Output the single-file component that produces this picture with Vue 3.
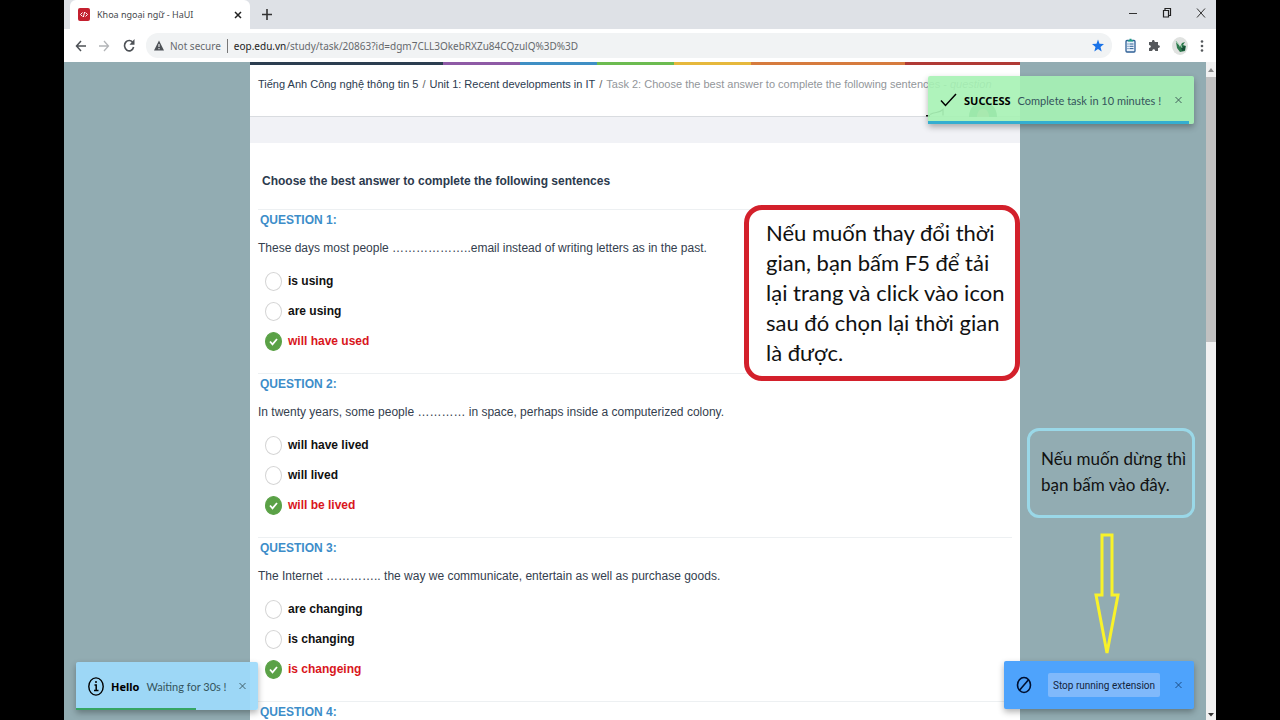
<template>
  <div class="screen">
    <div class="browser">
      <header class="tab-strip">
        <div class="tab">
          <svg class="favicon" viewBox="0 0 12 13" aria-hidden="true">
            <rect width="12" height="13" rx="2" fill="#c4202f" />
            <path d="M4.5 4.5 2.5 6.5l2 2M7.5 4.5l2 2-2 2M6.6 4 5.4 9" fill="none" stroke="#fff" stroke-width="1" />
          </svg>
          <span class="tab-title">Khoa ngoại ngữ - HaUI</span>
          <button class="icon-btn" type="button" aria-label="Close tab">
            <svg width="8" height="8" viewBox="0 0 8 8">
              <path d="M1 1l6 6M7 1 1 7" stroke="#222" stroke-width="1.5" />
            </svg>
          </button>
        </div>
        <button class="icon-btn new-tab" type="button" aria-label="New tab">
          <svg width="10" height="11" viewBox="0 0 10 11">
            <path d="M5 0v11M0 5.5h10" stroke="#333" stroke-width="1.6" />
          </svg>
        </button>
        <div class="window-controls">
          <button class="icon-btn" type="button" aria-label="Minimize">
            <svg width="10" height="12" viewBox="0 0 10 12"><path d="M1 6.500h8" stroke="#333" /></svg>
          </button>
          <button class="icon-btn" type="button" aria-label="Restore">
            <svg width="10" height="12" viewBox="0 0 10 12">
              <path d="M1.5 3.500h5v6.500h-5zM3 3V1.500h5.500V8.500H7" fill="none" stroke="#222" stroke-width="1.2" />
            </svg>
          </button>
          <button class="icon-btn" type="button" aria-label="Close">
            <svg width="10" height="12" viewBox="0 0 10 12"><path d="M1 1.500l8 9M9 1.500l-8 9" stroke="#333" /></svg>
          </button>
        </div>
      </header>

      <div class="toolbar">
        <button class="icon-btn" type="button" aria-label="Back">
          <svg width="11" height="12" viewBox="0 0 11 12">
            <path d="M11 6H1.500M6 1 1.500 6 6 11" fill="none" stroke="#4d5156" stroke-width="1.5" />
          </svg>
        </button>
        <button class="icon-btn" type="button" aria-label="Forward">
          <svg width="11" height="12" viewBox="0 0 11 12">
            <path d="M0 6h9.500M5 1l4.500 5L5 11" fill="none" stroke="#b3b5b8" stroke-width="1.3" />
          </svg>
        </button>
        <button class="icon-btn" type="button" aria-label="Reload">
          <svg width="12" height="13" viewBox="0 0 12 13">
            <path d="M10 3.800A4.600 5.200 0 1 0 10.600 8" fill="none" stroke="#4d5156" stroke-width="1.6" />
            <path d="M11.500 0v5.700H6.500z" fill="#4d5156" />
          </svg>
        </button>
        <div class="address-bar">
          <svg width="10" height="11" viewBox="0 0 10 11" aria-hidden="true">
            <path d="M5 .5 10 10.500H0z" fill="#4d5156" />
            <path d="M5 4v3M5 8v1.200" stroke="#f1f3f4" stroke-width="1.100" />
          </svg>
          <span class="not-secure">Not secure</span>
          <span class="divider"></span>
          <span class="url"><b>eop.edu.vn</b>/study/task/20863?id=dgm7CLL3OkebRXZu84CQzulQ%3D%3D</span>
          <button class="icon-btn star" type="button" aria-label="Bookmark">
            <svg width="12" height="13" viewBox="0 0 12 13">
              <path d="M6 .5 7.500 4.700 12 5 8.500 8 9.700 12.500 6 10 2.300 12.500 3.500 8 0 5l4.500-.3z" fill="#1a73e8" />
            </svg>
          </button>
        </div>
        <div class="extensions">
          <button class="icon-btn" type="button" aria-label="Clipboard">
            <svg width="11" height="15" viewBox="0 0 11 15">
              <rect x="1" y="2.500" width="9" height="11.500" rx="1" fill="#eaf2fb" stroke="#2f6096" stroke-width="1.300" />
              <path d="M3 3.500V2h1.500V.7h2V2H8v1.500z" fill="#239a86" />
              <path d="M2.500 6h1M4.500 6h4M2.500 8.300h1M4.500 8.300h4M2.500 10.600h1M4.500 10.600h4" stroke="#2f6096" />
            </svg>
          </button>
          <button class="icon-btn" type="button" aria-label="Extensions">
            <svg width="12" height="13" viewBox="0 0 12 13">
              <path d="M1 3h3C3.500.3 7 .3 6.700 3H10v3.200c2.500-.3 2.500 3 0 2.800V12H7.200c0-2.300-3-2.300-3 0H1V9c2.400 0 2.400-3 0-3z" fill="#55585c" />
            </svg>
          </button>
          <button class="icon-btn" type="button" aria-label="Profile">
            <svg width="16" height="18" viewBox="0 0 16 18">
              <ellipse cx="8" cy="9" rx="8" ry="9" fill="#e0e2e0" />
              <path d="M4 5l3 3 1 2 2-4 3-1-2 3 3 1-1 5-5 1-3-4z" fill="#2d7a4d" />
              <path d="M9 10l4-1 0 4-3 1z" fill="#164d35" />
              <path d="M4 4l3 4M9 8l1 3" stroke="#8fc6a0" />
            </svg>
          </button>
          <button class="icon-btn" type="button" aria-label="Menu">
            <svg width="4" height="14" viewBox="0 0 4 14">
              <g fill="#55585c"><circle cx="2" cy="2.500" r="1.300" /><circle cx="2" cy="7" r="1.300" /><circle cx="2" cy="11.500" r="1.300" /></g>
            </svg>
          </button>
        </div>
      </div>

      <div class="viewport">
        <div class="page">
          <main class="sheet">
            <div class="stripe">
              <span
                v-for="part in stripe"
                :key="part.color"
                :style="{ width: part.width + '%', background: part.color }"
              ></span>
            </div>
            <nav class="breadcrumb" aria-label="Breadcrumb">
              <a href="#">Tiếng Anh Công nghệ thông tin 5</a>
              <span class="slash">/</span>
              <a href="#">Unit 1: Recent developments in IT</a>
              <span class="slash">/</span>
              <span class="current">Task 2: Choose the best answer to complete the following sentences - <i>question</i></span>
              <svg class="header-art" width="72" height="18" viewBox="0 0 72 18" aria-hidden="true">
                <path d="M0 15h4v1.500H0z" fill="#111" />
                <path d="M4 14.500c5-3 9-1 13-5v6" fill="none" stroke="#444" stroke-width="1.200" />
                <path d="M43 17c0-20 28-20 28 0z" fill="#3f8a5a" />
                <path d="M51 17c0-11 12-11 12 0z" fill="#b79a86" />
              </svg>
            </nav>
            <div class="band"></div>

            <form class="quiz" @submit.prevent>
              <h1>Choose the best answer to complete the following sentences</h1>
              <section v-for="(q, qi) in questions" :key="qi" class="question">
                <h2>QUESTION {{ qi + 1 }}:</h2>
                <p>{{ q.text }}</p>
                <label
                  v-for="option in q.options"
                  :key="option"
                  class="option"
                  :class="{ chosen: q.answer === option }"
                >
                  <span class="mark">
                    <input v-model="q.answer" type="radio" :name="'q' + qi" :value="option" />
                    <svg v-if="q.answer === option" width="17" height="19" viewBox="0 0 17 19" aria-hidden="true">
                      <path d="M5 9.500 7.500 12.300 12 7" fill="none" stroke="#fff" stroke-width="1.800" />
                    </svg>
                  </span>
                  {{ option }}
                </label>
              </section>
            </form>

            <aside class="note note-reload">
              Nếu muốn thay đổi thời<br />
              gian, bạn bấm F5 để tải<br />
              lại trang và click vào icon<br />
              sau đó chọn lại thời gian<br />
              là được.
            </aside>
          </main>
        </div>

        <div class="scrollbar" aria-hidden="true">
          <svg width="10" height="15" viewBox="0 0 10 15"><path d="M5 6l3 4H2z" fill="#8a8a8a" /></svg>
          <div class="thumb"></div>
          <svg width="10" height="12" viewBox="0 0 10 12"><path d="M2 5h6L5 8.500z" fill="#333" /></svg>
        </div>

        <aside class="note note-stop">
          Nếu muốn dừng thì<br />
          bạn bấm vào đây.
        </aside>
        <svg class="arrow" width="26" height="124" viewBox="0 0 26 124" aria-hidden="true">
          <path d="M8 2h10v60h6L13 120 2 62h6z" fill="none" stroke="#f8f22a" stroke-width="3" />
        </svg>

        <div class="toast success" role="status">
          <svg width="17" height="14" viewBox="0 0 17 14" aria-hidden="true">
            <path d="M1 7.500 5.500 12.500 16 1" fill="none" stroke="#000" stroke-width="1.500" />
          </svg>
          <strong>SUCCESS</strong>
          <span>Complete task in 10 minutes !</span>
          <button class="icon-btn close" type="button" aria-label="Dismiss">
            <svg width="7" height="8" viewBox="0 0 7 8"><path d="M.5 1l6 6M6.500 1l-6 6" stroke="#40605a" /></svg>
          </button>
          <div class="progress"><span :style="{ width: '98%' }"></span></div>
        </div>

        <div class="toast hello" role="status">
          <svg width="16" height="19" viewBox="0 0 16 19" aria-hidden="true">
            <ellipse cx="8" cy="9.500" rx="7.200" ry="8.600" fill="none" stroke="#000" stroke-width="1.400" />
            <path d="M6.500 8h1.700v5.500M6 13.500h4.500M7 5h2" fill="none" stroke="#000" stroke-width="1.500" />
          </svg>
          <strong>Hello</strong>
          <span>Waiting for 30s !</span>
          <button class="icon-btn close" type="button" aria-label="Dismiss">
            <svg width="7" height="8" viewBox="0 0 7 8"><path d="M.5 1l6 6M6.500 1l-6 6" stroke="#40606a" /></svg>
          </button>
          <div class="progress"><span :style="{ width: '66%' }"></span></div>
        </div>

        <div class="toast stop" role="status">
          <svg width="16" height="18" viewBox="0 0 16 18" aria-hidden="true">
            <ellipse cx="8" cy="9" rx="6.500" ry="7.500" fill="none" stroke="#001030" stroke-width="1.600" />
            <path d="M12.500 3.800 3.500 14.200" stroke="#001030" stroke-width="1.600" />
          </svg>
          <button class="action" type="button">Stop running extension</button>
          <button class="icon-btn close" type="button" aria-label="Dismiss">
            <svg width="7" height="8" viewBox="0 0 7 8"><path d="M.5 1l6 6M6.500 1l-6 6" stroke="#1d4f86" /></svg>
          </button>
        </div>
      </div>
    </div>
  </div>
</template>

<script setup>
import { reactive } from 'vue';

const stripe = [
  { color: '#2c3e50', width: 25 },
  { color: '#8e5aa5', width: 10 },
  { color: '#3f8fc4', width: 10 },
  { color: '#6cbb50', width: 10 },
  { color: '#e6b83c', width: 10 },
  { color: '#d67b3e', width: 20 },
  { color: '#b03a35', width: 15 }
];

const questions = reactive([
  {
    text: 'These days most people ………………..email instead of writing letters as in the past.',
    options: ['is using', 'are using', 'will have used'],
    answer: 'will have used'
  },
  {
    text: 'In twenty years, some people ………… in space, perhaps inside a computerized colony.',
    options: ['will have lived', 'will lived', 'will be lived'],
    answer: 'will be lived'
  },
  {
    text: 'The Internet ………….. the way we communicate, entertain as well as purchase goods.',
    options: ['are changing', 'is changing', 'is changeing'],
    answer: 'is changeing'
  },
  { text: '', options: [], answer: '' }
]);
</script>

<style>
body {
  margin: 0;
  background: #000;
}
</style>

<style scoped>
.screen {
  box-sizing: border-box;
  height: 100vh;
  padding: 0 5%;
  background: #000;
}

.browser {
  display: flex;
  flex-direction: column;
  height: 100%;
  background: #fff;
  font-family: "Noto Sans", sans-serif;
}

svg {
  flex-shrink: 0;
}

.icon-btn {
  display: flex;
  align-items: center;
  justify-content: center;
  padding: 0;
  border: 0;
  background: none;
}

/* Browser chrome */
.tab-strip {
  display: flex;
  align-items: center;
  height: 29px;
  padding: 0 10px 0 6px;
  background: #dee1e6;
}

.tab {
  display: flex;
  align-items: center;
  gap: 7px;
  width: 164px;
  height: 29px;
  padding: 0 8px;
  border-radius: 6px 6px 0 0;
  background: #fff;
}

.favicon {
  width: 12px;
  height: 13px;
}

.tab-title {
  flex: 1;
  color: #45484c;
  font-size: 9px;
  white-space: nowrap;
}

.new-tab {
  margin-left: 12px;
}

.window-controls {
  display: flex;
  gap: 24px;
  margin-left: auto;
  padding-bottom: 3px;
}

.toolbar {
  display: flex;
  align-items: center;
  gap: 13px;
  height: 33px;
  padding: 0 12px 0 11px;
  background: #fff;
}

.address-bar {
  display: flex;
  flex: 1;
  align-items: center;
  gap: 6px;
  height: 25px;
  margin-left: -2px;
  padding: 0 8px;
  border-radius: 12px;
  background: #f1f3f4;
  color: #66696d;
  font-size: 10px;
}

.divider {
  width: 1px;
  height: 14px;
  background: #777;
}

.url {
  flex: 1;
  white-space: nowrap;
}

.url b {
  color: #222;
  font-weight: 400;
}

.extensions {
  display: flex;
  align-items: center;
  gap: 12px;
}

/* Page */
.viewport {
  position: relative;
  display: flex;
  flex: 1;
  min-height: 0;
  overflow: hidden;
  background: #92acb2;
}

.page {
  display: flex;
  flex: 1;
  justify-content: center;
}

.sheet {
  position: relative;
  width: 100%;
  max-width: 770px;
  background: #fff;
  color: #34404e;
  font-family: "Liberation Sans", Arial, sans-serif;
  font-size: 12px;
}

.stripe {
  display: flex;
  height: 3px;
}

.breadcrumb {
  position: relative;
  display: flex;
  gap: 4px;
  box-sizing: border-box;
  height: 52px;
  padding: 9px 8px 0;
  border-bottom: 1px solid #d9dce0;
  font-size: 11px;
  line-height: 20px;
  white-space: nowrap;
}

.breadcrumb a {
  color: #2c3b50;
  text-decoration: none;
}

.breadcrumb .slash {
  color: #666;
}

.breadcrumb .current {
  color: #92969a;
}

.header-art {
  position: absolute;
  right: 22px;
  bottom: -2px;
}

.band {
  height: 26px;
  background: #f1f2f6;
}

.quiz {
  padding: 28px 8px 0;
}

h1 {
  margin: 0 0 18px;
  padding-left: 4px;
  color: #2c3a4d;
  font-size: 12px;
  line-height: 20px;
}

.question {
  padding-bottom: 17px;
  border-top: 1px solid #edf0f2;
}

h2 {
  margin: 0 0 8px;
  padding-left: 2px;
  color: #3d8dc9;
  font-size: 12px;
  font-weight: 700;
  line-height: 20px;
}

.question p {
  margin: 0 0 8px;
  line-height: 20px;
}

.option {
  display: flex;
  align-items: center;
  gap: 6px;
  height: 30px;
  padding-left: 7px;
  color: #111;
  font-weight: 700;
}

.option.chosen {
  color: #d9161c;
}

.mark {
  display: grid;
}

.mark > * {
  grid-area: 1 / 1;
}

.mark input {
  box-sizing: border-box;
  width: 17px;
  height: 19px;
  margin: 0;
  border: 1px solid #d4d4d4;
  border-radius: 50%;
  background: #fff;
  appearance: none;
}

.mark input:checked {
  border-color: #5aa146;
  background: #5aa146;
}

.scrollbar {
  display: flex;
  flex-direction: column;
  width: 10px;
  background: #f1f1f1;
}

.thumb {
  height: 265px;
  margin-bottom: auto;
  background: #c1c1c1;
}

/* Hand-drawn notes over the page */
.note {
  position: absolute;
  box-sizing: border-box;
  color: #111;
  font-family: Lato, "Noto Sans", sans-serif;
  white-space: nowrap;
}

.note-reload {
  top: 143px;
  right: 0;
  width: 276px;
  padding: 8px 17px;
  border: 5px solid #d3202b;
  border-radius: 18px;
  background: #fff;
  font-size: 22px;
  line-height: 30px;
}

.note-stop {
  top: 366px;
  right: 21px;
  width: 168px;
  height: 90px;
  padding: 15px 11px;
  border: 3px solid #9ad8e8;
  border-radius: 12px;
  font-size: 17px;
  line-height: 26px;
}

.arrow {
  position: absolute;
  top: 471px;
  right: 96px;
}

/* Toasts */
.toast {
  position: absolute;
  right: 22px;
  display: flex;
  align-items: center;
  box-sizing: border-box;
  height: 48px;
  padding: 0 12px;
  border-radius: 2px;
  box-shadow: 0 3px 6px rgba(0, 0, 0, 0.3);
  color: #34545c;
  font-family: Lato, "Noto Sans", sans-serif;
  font-size: 11px;
  white-space: nowrap;
}

.toast strong {
  margin: 0 7px;
  color: #000;
  font-family: "Noto Sans", sans-serif;
}

.toast .close {
  margin-left: auto;
}

.progress {
  position: absolute;
  right: 0;
  bottom: 0;
  left: 0;
}

.progress span {
  display: block;
  height: 3px;
}

.success {
  top: 14px;
  width: 266px;
  background: rgba(166, 242, 180, 0.9);
}

.success .progress span {
  background: #34aed0;
}

.hello {
  right: auto;
  bottom: 10px;
  left: 12px;
  width: 182px;
  background: rgba(157, 218, 250, 0.94);
}

.hello .progress span {
  height: 2px;
  background: #36a564;
}

.stop {
  bottom: 11px;
  width: 190px;
  background: #4ea3fc;
}

.action {
  height: 24px;
  margin-left: 16px;
  padding: 0 5px;
  border: 0;
  border-radius: 2px;
  background: #80b9fb;
  color: #12243c;
  font-family: Roboto, sans-serif;
  font-size: 10px;
}
</style>
